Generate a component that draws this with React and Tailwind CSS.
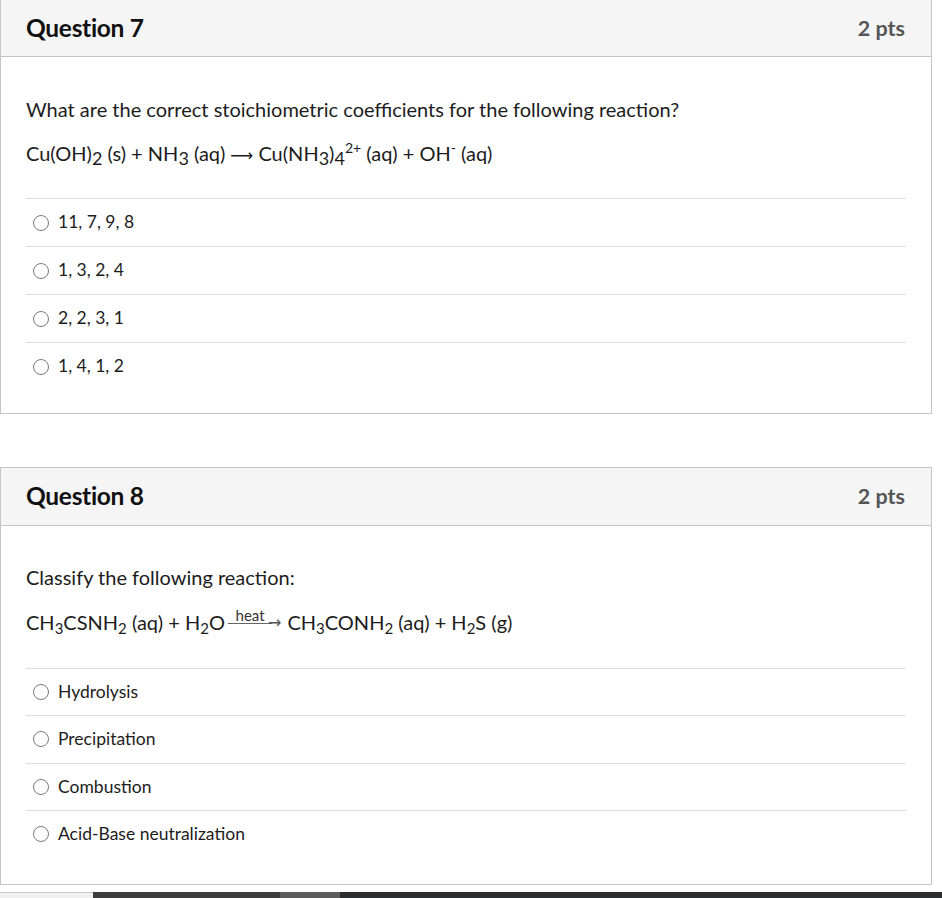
const font = { fontFamily: "Lato, 'Noto Sans', sans-serif" };

function Radio() {
  return <span className="inline-block w-[16px] h-[16px] rounded-full border border-[#7a7a7a] bg-white shrink-0" />;
}

function Answers({ items, rowH }) {
  return (
    <div>
      {items.map((a) => (
        <div
          key={a}
          className={`flex items-center gap-[9px] pl-[7px] border-t border-[#dedede] text-[17.5px] text-[#1c1c1c] ${rowH}`}
        >
          <Radio />
          <span>{a}</span>
        </div>
      ))}
    </div>
  );
}

function Header({ title, h }) {
  return (
    <div className={`flex items-center justify-between pl-[25px] pr-[26px] bg-[#f5f5f5] border-b border-[#c4c4c4] ${h}`}>
      <span className="text-[24.5px] font-bold text-[#111] tracking-[-0.3px]">{title}</span>
      <span className="text-[21.5px] font-bold text-[#555]">2 pts</span>
    </div>
  );
}

const Sub = ({ children }) => <span className="relative top-[4px] text-[18px] leading-none">{children}</span>;
const Sub2 = ({ children }) => <span className="relative top-[4px] text-[15px] leading-none">{children}</span>;
const Sup = ({ children }) => <span className="relative -top-[8px] text-[14px] leading-none">{children}</span>;

function HeatArrow() {
  return (
    <span className="relative -top-[6px] inline-flex items-center ml-[3px] mr-[6px]">
      <span className="relative inline-block w-[44px] h-px bg-[#666]">
        <span className="absolute bottom-[1px] left-0 right-0 text-center text-[15px] leading-none text-[#333]">heat</span>
      </span>
      <span
        className="relative top-[-1px] text-[16px] leading-none text-[#555] -ml-[4px]"
        style={{ fontFamily: "'DejaVu Sans', sans-serif" }}
      >
        →
      </span>
    </span>
  );
}

export default function App() {
  return (
    <div className="min-h-[898px] bg-white text-[#1c1c1c] pr-[10px] flex flex-col" style={font}>
      <div className="border-x border-b border-[#c4c4c4]">
        <Header title="Question 7" h="h-[57px]" />
        <div className="px-[25px] pt-[39px] pb-[23px]">
          <p className="text-[20px] leading-[27px]">
            What are the correct stoichiometric coefficients for the following reaction?
          </p>
          <p className="mt-[17px] text-[20px] leading-[27px]">
            Cu(OH)<Sub>2</Sub> (s) + NH<Sub>3</Sub> (aq){" "}
            <span style={{ fontFamily: "'DejaVu Sans', sans-serif" }} className="text-[16px]">⟶</span> Cu(NH<Sub>3</Sub>)
            <Sub>4</Sub>
            <Sup>2+</Sup> (aq) + OH<Sup>-</Sup> (aq)
          </p>
          <div className="mt-[29px]">
            <Answers items={["11, 7, 9, 8", "1, 3, 2, 4", "2, 2, 3, 1", "1, 4, 1, 2"]} rowH="h-[48px]" />
          </div>
        </div>
      </div>

      <div className="mt-[53px] border border-[#c4c4c4]">
        <Header title="Question 8" h="h-[58px]" />
        <div className="px-[25px] pt-[38px] pb-[26px]">
          <p className="text-[20px] leading-[27px]">Classify the following reaction:</p>
          <p className="mt-[18px] text-[20px] leading-[27px]">
            CH<Sub2>3</Sub2>CSNH<Sub2>2</Sub2> (aq) + H<Sub2>2</Sub2>O
            <HeatArrow />
            CH<Sub2>3</Sub2>CONH<Sub2>2</Sub2> (aq) + H<Sub2>2</Sub2>S (g)
          </p>
          <div className="mt-[30px]">
            <Answers
              items={["Hydrolysis", "Precipitation", "Combustion", "Acid-Base neutralization"]}
              rowH="h-[47.5px]"
            />
          </div>
        </div>
      </div>

      <div className="mt-auto -mr-[10px] flex h-[6px]">
        <div className="w-[93px] bg-[#f0f0f0] border-t border-[#c8c8c8]" />
        <div className="w-[187px] bg-[#3d3d3d]" />
        <div className="w-[60px] bg-[#5c5c5c]" />
        <div className="flex-1 bg-[#2b2e2f]" />
      </div>
    </div>
  );
}
